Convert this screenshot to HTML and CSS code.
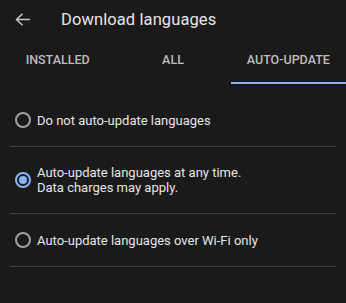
FILE: index.html
```html
<!DOCTYPE html>
<html lang="en">
<head>
    <meta charset="UTF-8">
    <meta name="viewport" content="width=device-width, initial-scale=1.0">
    <title>Download languages</title>
    <link rel="stylesheet" href="styles.css">
</head>
<body>
    <!-- App bar -->
    <div class="appbar">
        <svg class="back" width="16" height="13" viewBox="0 0 16 13">
            <path d="M15 6.5H1.5M7.5 0.8L1.5 6.5L7.5 12.2" fill="none" stroke="#c8c8c8" stroke-width="1.5"/>
        </svg>
        <span class="title">Download languages</span>
    </div>

    <!-- Tabs -->
    <div class="tabs">
        <div class="tab">INSTALLED</div>
        <div class="tab">ALL</div>
        <div class="tab active">AUTO-UPDATE</div>
    </div>

    <!-- Options -->
    <div class="options">
        <div class="option">
            <span class="radio"></span>
            <span class="label">Do not auto-update languages</span>
        </div>
        <div class="option">
            <span class="radio checked"></span>
            <span class="label">Auto-update languages at any time.<br>Data charges may apply.</span>
        </div>
        <div class="option">
            <span class="radio"></span>
            <span class="label">Auto-update languages over Wi-Fi only</span>
        </div>
    </div>
</body>
</html>
```

FILE: styles.css
```css
body {
    margin: 0;
    background-color: #1a1a1a;
    font-family: Roboto, "Liberation Sans", sans-serif;
    color: #e6e6e6;
}
.appbar {
    height: 40px;
    display: flex;
    align-items: center;
}
.back {
    margin-left: 15px;
    margin-top: -2px;
}
.title {
    margin-left: 30px;
    font-size: 16.5px;
    margin-top: -1px;
    letter-spacing: 0.1px;
}
.tabs {
    display: grid;
    grid-template-columns: 1fr 1fr 1fr;
    height: 44px;
}
.tab {
    display: flex;
    align-items: center;
    justify-content: center;
    font-size: 12.5px;
    font-weight: 500;
    color: #bdbdbd;
    padding-bottom: 3px;
    border-bottom: 2px solid transparent;
    box-sizing: border-box;
}
.tab.active {
    border-bottom-color: #8ab4f8;
}
.options {
    padding: 10px 10px 0;
}
.option {
    display: flex;
    align-items: center;
    padding: 18px 0;
    border-bottom: 1px solid #3e3e3e;
}
.radio {
    width: 16px;
    height: 16px;
    box-sizing: border-box;
    border: 2px solid #a0a0a0;
    border-radius: 50%;
    margin-left: 5px;
    margin-right: 6px;
    flex-shrink: 0;
    position: relative;
}
.radio.checked {
    border-color: #8ab4f8;
}
.radio.checked::after {
    content: "";
    position: absolute;
    left: 2px;
    top: 2px;
    width: 8px;
    height: 8px;
    border-radius: 50%;
    background-color: #8ab4f8;
}
.label {
    font-size: 13px;
    line-height: 15px;
}
```
